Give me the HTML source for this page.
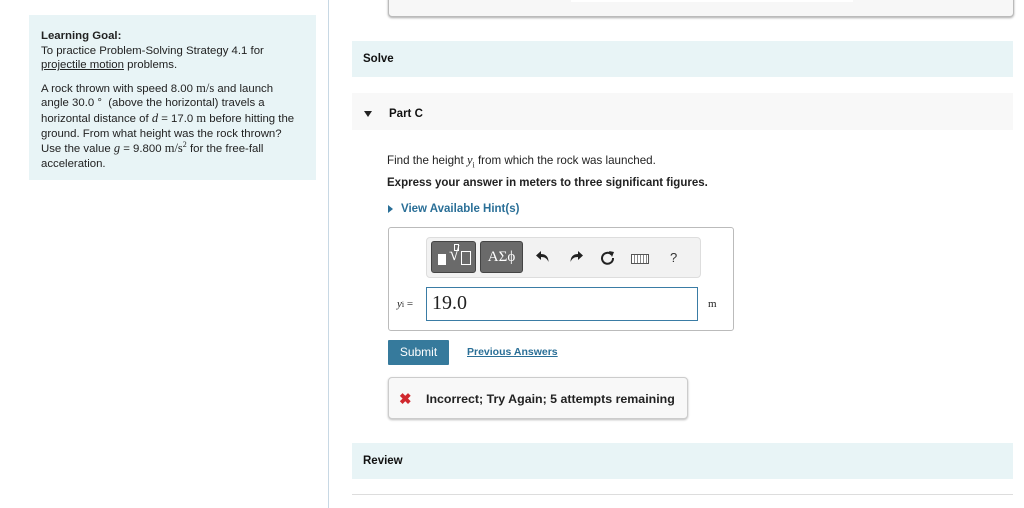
<!DOCTYPE html>
<html><head><meta charset="utf-8"><style>
*{margin:0;padding:0;box-sizing:border-box}
body{width:1024px;height:508px;position:relative;background:#fff;font-family:"Liberation Sans",Arial,sans-serif;color:#222;overflow:hidden}
.a{position:absolute}
.m{font-family:"Liberation Serif",serif;font-size:12.5px}
.lg{left:29px;top:15px;width:287px;height:165px;background:#e8f4f6;font-size:11.4px;line-height:14.6px;padding:14px 12px}
.band{left:352px;width:661px;height:36px;font-size:11.5px;font-weight:bold;color:#111;padding-left:11px;line-height:37px}
.tb{width:33px;height:32px;border-radius:3px;background:#6a6a6a;border:1px solid #444;color:#fff}
</style></head><body>
<div class="a lg">
<div style="font-weight:bold">Learning Goal:</div>
<div>To practice Problem-Solving Strategy 4.1 for <span style="text-decoration:underline">projectile motion</span> problems.</div>
<div style="margin-top:8px">A rock thrown with speed 8.00 <span class="m">m/s</span> and launch angle 30.0 ° &nbsp;(above the horizontal) travels a horizontal distance of <span class="m"><i>d</i></span> = 17.0 <span class="m">m</span> before hitting the ground. From what height was the rock thrown? Use the value <span class="m"><i>g</i></span> = 9.800 <span class="m">m/s<sup style="font-size:8px;line-height:0">2</sup></span> for the free-fall acceleration.</div>
</div>
<div class="a" style="left:328px;top:0;width:1px;height:508px;background:#c8d8e4"></div>
<div class="a" style="left:388px;top:-10px;width:626px;height:27px;background:#f7f7f7;border:1px solid #bbb;border-radius:4px;box-shadow:0 1px 2px #aaa"></div>
<div class="a" style="left:571px;top:0;width:282px;height:2px;background:#fff"></div>
<div class="a band" style="top:41px;background:#e8f4f6">Solve</div>
<div class="a band" style="top:93px;height:37px;line-height:42px;background:#f8f8f8;padding-left:37px">Part C</div>
<div class="a" style="left:364px;top:111px;width:0;height:0;border-left:4px solid transparent;border-right:4px solid transparent;border-top:6px solid #222"></div>
<div class="a" style="left:387px;top:153px;font-size:11.6px">Find the height <span class="m"><i>y</i><sub style="font-size:8px">i</sub></span> from which the rock was launched.</div>
<div class="a" style="left:387px;top:177px;font-size:11.5px;font-weight:bold">Express your answer in meters to three significant figures.</div>
<div class="a" style="left:388px;top:205px;width:0;height:0;border-top:4px solid transparent;border-bottom:4px solid transparent;border-left:5px solid #2a6f97"></div>
<div class="a" style="left:401px;top:203px;font-size:11.5px;font-weight:bold;color:#2a6f97">View Available Hint(s)</div>
<div class="a" style="left:388px;top:227px;width:346px;height:104px;border:1px solid #bbb;border-radius:3px"></div>
<div class="a" style="left:426px;top:237px;width:275px;height:41px;background:#f2f2f2;border:1px solid #ddd;border-radius:4px"></div>
<div class="a tb" style="left:431px;top:241px;width:45px"><div class="a" style="left:6px;top:12px;width:8px;height:11px;background:#fff"></div><span class="a m" style="left:17px;top:2px;font-size:19px">√</span><div class="a" style="left:29px;top:9px;width:10px;height:14px;border:1px solid #fff"></div><div class="a" style="left:22px;top:2px;width:5px;height:7px;border:1px solid #fff"></div></div>
<div class="a tb m" style="left:480px;top:241px;width:43px;font-size:15px;text-align:center;line-height:30px">ΑΣϕ</div>
<svg class="a" style="left:536px;top:251px" width="14" height="12" viewBox="0 0 14 12"><path d="M5 0L0 4.5L5 9V6C9 6 11 7.5 12.5 11C12.5 6 10 3 5 3Z" fill="#222"/></svg>
<svg class="a" style="left:569px;top:251px" width="14" height="12" viewBox="0 0 14 12"><path d="M9 0L14 4.5L9 9V6C5 6 3 7.5 1.5 11C1.5 6 4 3 9 3Z" fill="#222"/></svg>
<svg class="a" style="left:600px;top:250px" width="16" height="16" viewBox="0 0 16 16"><path d="M11.5 4.5A5.5 5.5 0 1 0 13 8" fill="none" stroke="#222" stroke-width="2"/><path d="M9 1L14 2L12 7Z" fill="#222"/></svg>
<div class="a" style="left:631px;top:254px;width:18px;height:10px;border:1px solid #555;background:repeating-linear-gradient(90deg,#fff 0 2px,#888 2px 3px)"></div>
<div class="a" style="left:670px;top:250px;font-size:13px;color:#333">?</div>
<div class="a m" style="left:397px;top:298px;font-size:11px"><i>y</i><span style="font-size:8px">i</span> =</div>
<div class="a m" style="left:426px;top:287px;width:272px;height:34px;border:1px solid #3a7ca5;font-size:20px;padding:4px 5px">19.0</div>
<div class="a m" style="left:708px;top:298px;font-size:11px">m</div>
<div class="a" style="left:388px;top:340px;width:61px;height:25px;background:#367a9c;color:#fff;font-size:12px;text-align:center;line-height:25px;border-radius:1px">Submit</div>
<div class="a" style="left:467px;top:346px;font-size:10.5px;font-weight:bold;color:#2a6f97;text-decoration:underline">Previous Answers</div>
<div class="a" style="left:388px;top:377px;width:300px;height:42px;background:#f8f8f8;border:1px solid #ccc;border-radius:4px;box-shadow:0 1px 2px #bbb"></div>
<div class="a" style="left:399px;top:390px;font-size:15px;font-weight:bold;color:#d0282e">✖</div>
<div class="a" style="left:426px;top:392px;font-size:12.4px;font-weight:bold;color:#222">Incorrect; Try Again; 5 attempts remaining</div>
<div class="a band" style="top:443px;background:#e8f4f6">Review</div>
<div class="a" style="left:352px;top:494px;width:661px;height:1px;background:#ddd"></div>
</body></html>
